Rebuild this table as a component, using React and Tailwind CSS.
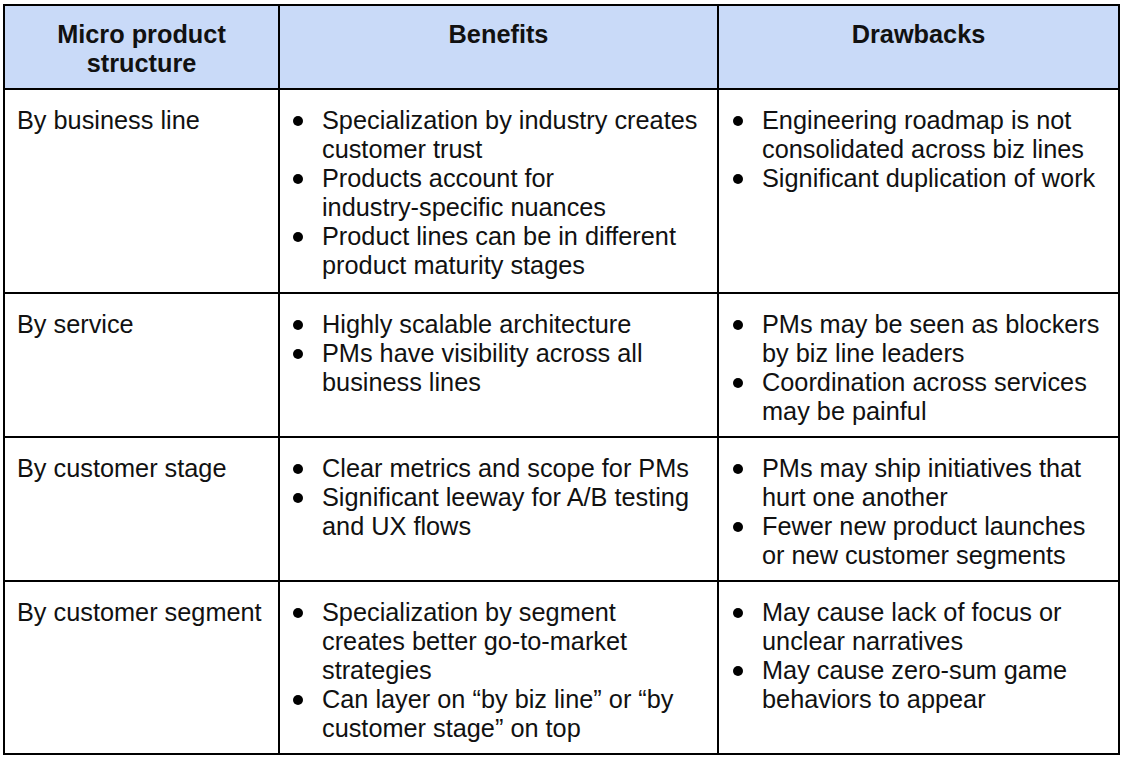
import React from "react";

const rows = [
  {
    name: "By business line",
    h: "h-[204px]",
    benefits: [
      ["Specialization by industry creates", "customer trust"],
      ["Products account for", "industry-specific nuances"],
      ["Product lines can be in different", "product maturity stages"],
    ],
    drawbacks: [
      ["Engineering roadmap is not", "consolidated across biz lines"],
      ["Significant duplication of work"],
    ],
  },
  {
    name: "By service",
    h: "h-[144px]",
    benefits: [
      ["Highly scalable architecture"],
      ["PMs have visibility across all", "business lines"],
    ],
    drawbacks: [
      ["PMs may be seen as blockers", "by biz line leaders"],
      ["Coordination across services", "may be painful"],
    ],
  },
  {
    name: "By customer stage",
    h: "h-[144px]",
    benefits: [
      ["Clear metrics and scope for PMs"],
      ["Significant leeway for A/B testing", "and UX flows"],
    ],
    drawbacks: [
      ["PMs may ship initiatives that", "hurt one another"],
      ["Fewer new product launches", "or new customer segments"],
    ],
  },
  {
    name: "By customer segment",
    h: "h-[171px]",
    last: true,
    benefits: [
      ["Specialization by segment", "creates better go-to-market", "strategies"],
      ["Can layer on \u201cby biz line\u201d or \u201cby", "customer stage\u201d on top"],
    ],
    drawbacks: [
      ["May cause lack of focus or", "unclear narratives"],
      ["May cause zero-sum game", "behaviors to appear"],
    ],
  },
];

function Bullets({ items }) {
  return (
    <ul className="flex flex-col">
      {items.map((lines, i) => (
        <li key={i} className="flex">
          <div className="w-[29px] h-[29px] shrink-0 pt-[10px]">
            <div className="w-[10px] h-[10px] rounded-full bg-black" />
          </div>
          <div className="whitespace-nowrap">
            {lines.map((l, j) => (
              <div key={j}>{l}</div>
            ))}
          </div>
        </li>
      ))}
    </ul>
  );
}

export default function App() {
  return (
    <div
      className="bg-white min-h-[760px] w-[1133px] pl-[3px] pt-[4px] text-[#111] text-[25.3px] leading-[29px]"
      style={{ fontFamily: '"Liberation Sans", Arial, sans-serif' }}
    >
      <div className="w-[1117px] border-2 border-black">
        <div className="flex h-[84px] border-b-2 border-black bg-[#c9daf8] font-bold text-center">
          <div className="w-[275px] shrink-0 border-r-2 border-black pt-[14px]">
            <div>Micro product</div>
            <div>structure</div>
          </div>
          <div className="w-[439px] shrink-0 border-r-2 border-black pt-[14px]">
            Benefits
          </div>
          <div className="flex-1 pt-[14px]">Drawbacks</div>
        </div>
        {rows.map((r, i) => (
          <div
            key={i}
            className={`flex ${r.h} ${r.last ? "" : "border-b-2 border-black"}`}
          >
            <div className="w-[275px] shrink-0 border-r-2 border-black pt-[16px] pl-[12px] whitespace-nowrap">
              {r.name}
            </div>
            <div className="w-[439px] shrink-0 border-r-2 border-black pt-[16px] pl-[13px]">
              <Bullets items={r.benefits} />
            </div>
            <div className="flex-1 pt-[16px] pl-[14px]">
              <Bullets items={r.drawbacks} />
            </div>
          </div>
        ))}
      </div>
    </div>
  );
}
